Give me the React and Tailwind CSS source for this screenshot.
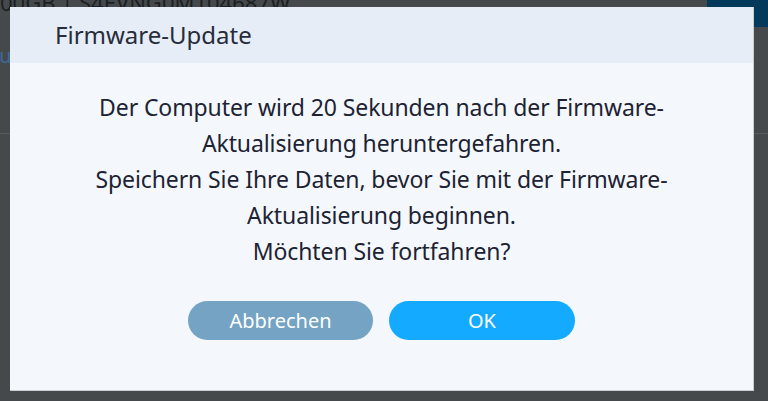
export default function App() {
  return (
    <div className="relative w-[768px] h-[401px] overflow-hidden bg-[#45494c] font-['Noto_Sans',sans-serif]">
      {/* page behind the overlay */}
      <div className="absolute left-0 top-[-14px] text-[22px] text-[#1c1f22] whitespace-nowrap">
        00GB | S4EVNG0M104687W
      </div>
      <div className="absolute right-0 top-0 w-[61px] h-[27px] bg-[#033a5c]" />
      <div className="absolute left-[-12px] top-[41px] text-[20px] text-[#3b6a96]">eu</div>
      <div className="absolute left-0 right-0 top-[133px] h-px bg-[#575b5e]" />

      {/* dialog */}
      <div className="absolute left-[10px] top-[7px] w-[744px] h-[384px] flex flex-col bg-[#f4f8fc] border-r border-b border-[#c9ced3]">
        <div className="h-[56px] shrink-0 bg-[#e6edf7] flex items-center pl-[45px] text-[24px] text-[#262c3a]">
          Firmware-Update
        </div>
        <div className="flex flex-col items-center pt-[26px]">
          <p className="text-center text-[23px] leading-[36px] text-[#1d2333] tracking-[-0.1px]">
            Der Computer wird 20 Sekunden nach der Firmware-
            <br />
            Aktualisierung heruntergefahren.
            <br />
            Speichern Sie Ihre Daten, bevor Sie mit der Firmware-
            <br />
            Aktualisierung beginnen.
            <br />
            Möchten Sie fortfahren?
          </p>
          <div className="flex gap-4 mt-[32px]">
            <button className="w-[185px] h-[39px] rounded-full bg-[#74a3c4] text-white text-[20px]">
              Abbrechen
            </button>
            <button className="w-[186px] h-[39px] rounded-full bg-[#14aaff] text-white text-[20px]">
              OK
            </button>
          </div>
        </div>
      </div>
    </div>
  );
}
